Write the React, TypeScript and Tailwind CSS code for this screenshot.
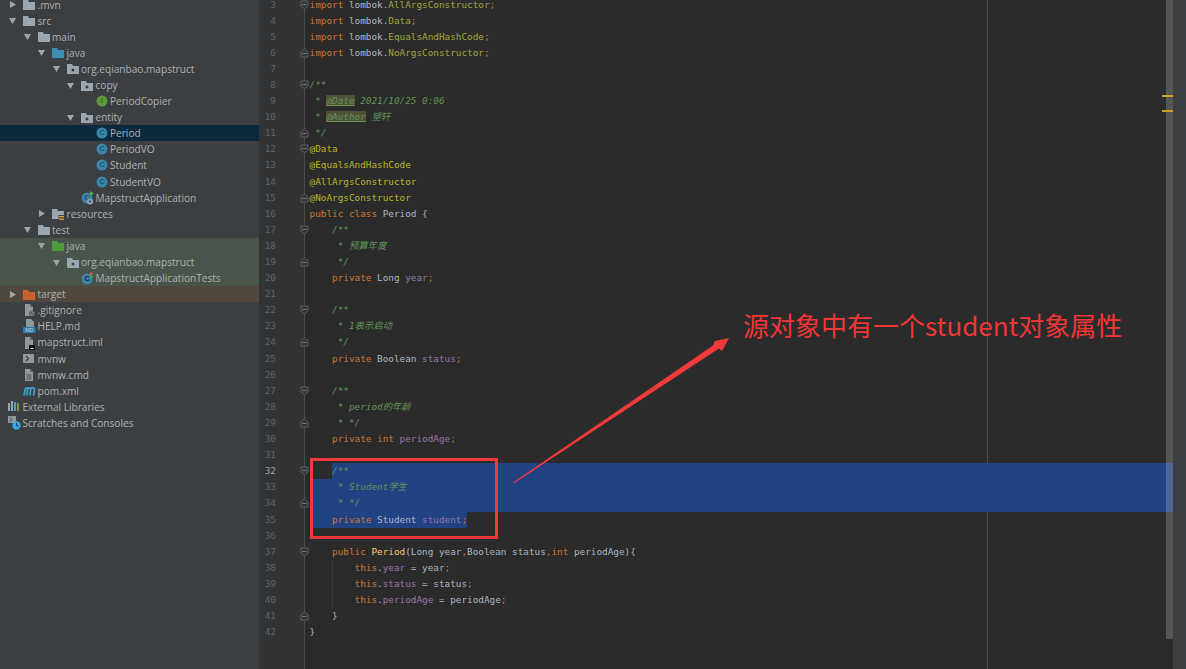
import type { ReactNode } from "react";

const Folder = ({ color }: { color: string }) => (
  <svg width="12" height="11" viewBox="0 0 12 11">
    <path d="M0 1h5l1 2h6v8H0z" fill={color} />
  </svg>
);

const PackageIcon = () => (
  <svg width="12" height="11" viewBox="0 0 12 11">
    <path d="M0 1h5l1 2h6v8H0z" fill="#9aa7b0" />
    <circle cx="6" cy="7" r="1.5" fill="#3c3f41" />
  </svg>
);

const ResourcesIcon = () => (
  <svg width="12" height="12" viewBox="0 0 12 12">
    <path d="M0 1h5l1 2h6v8H0z" fill="#9aa7b0" />
    <rect x="6.5" y="7" width="5.5" height="5" fill="#3c3f41" />
    <rect x="7" y="8" width="5" height="1.3" fill="#e0a030" />
    <rect x="7" y="10.5" width="5" height="1.3" fill="#e0a030" />
  </svg>
);

const Badge = ({ color, ink, letter }: { color: string; ink: string; letter: string }) => (
  <svg width="12" height="12" viewBox="0 0 12 12">
    <circle cx="6" cy="6" r="5.5" fill={color} />
    <text x="6" y="8.4" textAnchor="middle" fontSize="7" fontWeight="700" fontFamily="'Liberation Sans', sans-serif" fill={ink}>
      {letter}
    </text>
  </svg>
);

const AppIcon = () => (
  <svg width="13" height="14" viewBox="0 0 13 14">
    <circle cx="6" cy="7" r="5.5" fill="#3a86a8" />
    <text x="6" y="9.4" textAnchor="middle" fontSize="7" fontWeight="700" fontFamily="'Liberation Sans', sans-serif" fill="#1d4f68">
      C
    </text>
    <path d="M9 0l4 2.5L9 5z" fill="#4fae3e" />
    <circle cx="9" cy="10.5" r="3" fill="#8fa3b2" />
    <circle cx="9" cy="10.5" r="1.1" fill="#3c3f41" />
  </svg>
);

const TestIcon = () => (
  <svg width="13" height="13" viewBox="0 0 13 13">
    <circle cx="6" cy="7" r="5.5" fill="#3a86a8" />
    <text x="6" y="9.4" textAnchor="middle" fontSize="7" fontWeight="700" fontFamily="'Liberation Sans', sans-serif" fill="#10222c">
      C
    </text>
    <rect x="9" y="0.5" width="2.5" height="2.5" fill="#d8652f" />
    <rect x="9" y="3.5" width="2.5" height="2" fill="#4fae3e" />
  </svg>
);

const Sheet = ({ children }: { children?: ReactNode }) => (
  <svg width="12" height="14" viewBox="0 0 12 14">
    <path d="M2 1h5l3 3v9H2z" fill="#8e989f" />
    <path d="M7 1v3h3z" fill="#5d6468" />
    {children}
  </svg>
);

const GitIgnoreIcon = () => (
  <Sheet>
    <circle cx="9" cy="10.5" r="3" fill="#3c3f41" />
    <circle cx="9" cy="10.5" r="2" fill="none" stroke="#9aa7b0" strokeWidth="0.8" />
    <path d="M7.6 11.9l2.8-2.8" stroke="#9aa7b0" strokeWidth="0.8" />
  </Sheet>
);

const MdIcon = () => (
  <svg width="13" height="14" viewBox="0 0 13 14">
    <path d="M3 0h5l3 3v5H3z" fill="#8e989f" />
    <rect x="0" y="8" width="12.5" height="6" fill="#2b7aa5" />
    <text x="6.2" y="13" textAnchor="middle" fontSize="5.5" fontFamily="'Liberation Sans', sans-serif" fill="#c9dbe5">
      MD
    </text>
  </svg>
);

const ImlIcon = () => (
  <Sheet>
    <rect x="6" y="9" width="6" height="5" fill="#111" />
    <rect x="7.5" y="12" width="3" height="1" fill="#eee" />
  </Sheet>
);

const ShellIcon = () => (
  <svg width="11" height="9" viewBox="0 0 11 9">
    <rect width="11" height="9" fill="#8e989f" />
    <path d="M3 2l2.5 2.5L3 7" fill="none" stroke="#3c3f41" strokeWidth="1.2" />
  </svg>
);

const CmdIcon = () => (
  <Sheet>
    <path d="M3.5 7h5M3.5 9h5M3.5 11h5" stroke="#3c3f41" strokeWidth="0.9" />
  </Sheet>
);

const PomIcon = () => (
  <svg width="13" height="11" viewBox="0 0 13 11">
    <path
      d="M1 10.5L2.4 3.5C3.4 2.6 4.6 2.6 5.2 3.5C6.2 2.6 7.4 2.6 8 3.5C9 2.6 11 2.6 11.6 3.8L10.4 10.5M4.8 3.8L3.7 10.5M7.9 3.8L6.8 10.5"
      fill="none"
      stroke="#3f9fc7"
      strokeWidth="1.7"
    />
  </svg>
);

const LibrariesIcon = () => (
  <svg width="12" height="11" viewBox="0 0 12 11">
    <rect x="0" y="2" width="2" height="8" fill="#9aa7b0" />
    <rect x="3" y="0" width="2" height="10" fill="#9aa7b0" />
    <rect x="6" y="1" width="2" height="9" fill="#4f9ec4" />
    <rect x="9" y="2" width="2" height="8" fill="#62a04a" />
  </svg>
);

const ScratchIcon = () => (
  <svg width="13" height="14" viewBox="0 0 13 14">
    <rect x="0" y="0" width="8" height="7" fill="#8e989f" />
    <path d="M2 1.5l2 2-2 2" fill="none" stroke="#3c3f41" strokeWidth="1" />
    <circle cx="8.5" cy="9.5" r="4.2" fill="#35a8e0" />
    <path d="M8.5 7v2.7h2" fill="none" stroke="#1c3a4a" strokeWidth="1" />
  </svg>
);

const classIcon = <Badge color="#3a86a8" ink="#1d4f68" letter="C" />;

const gray = <Folder color="#9aa7b0" />;

const indent = ["pl-[7px]", "pl-[21.5px]", "pl-[36px]", "pl-[50.5px]", "pl-[65px]", "pl-[79.5px]"];

interface TreeRow {
  label: string;
  depth: number;
  icon: ReactNode;
  arrow?: "open" | "closed";
  tone?: string;
  root?: boolean;
}

const tree: TreeRow[] = [
  { label: ".mvn", depth: 0, icon: gray, arrow: "closed" },
  { label: "src", depth: 0, icon: gray, arrow: "open" },
  { label: "main", depth: 1, icon: gray, arrow: "open" },
  { label: "java", depth: 2, icon: <Folder color="#3f8fb5" />, arrow: "open" },
  { label: "org.eqianbao.mapstruct", depth: 3, icon: <PackageIcon />, arrow: "open" },
  { label: "copy", depth: 4, icon: <PackageIcon />, arrow: "open" },
  { label: "PeriodCopier", depth: 5, icon: <Badge color="#5c9a3c" ink="#2f5a1e" letter="I" /> },
  { label: "entity", depth: 4, icon: <PackageIcon />, arrow: "open" },
  { label: "Period", depth: 5, icon: classIcon, tone: "bg-[#0d293e]" },
  { label: "PeriodVO", depth: 5, icon: classIcon },
  { label: "Student", depth: 5, icon: classIcon },
  { label: "StudentVO", depth: 5, icon: classIcon },
  { label: "MapstructApplication", depth: 4, icon: <AppIcon /> },
  { label: "resources", depth: 2, icon: <ResourcesIcon />, arrow: "closed" },
  { label: "test", depth: 1, icon: gray, arrow: "open" },
  { label: "java", depth: 2, icon: <Folder color="#4f9a3c" />, arrow: "open", tone: "bg-[#49544a]" },
  { label: "org.eqianbao.mapstruct", depth: 3, icon: <PackageIcon />, arrow: "open", tone: "bg-[#49544a]" },
  { label: "MapstructApplicationTests", depth: 4, icon: <TestIcon />, tone: "bg-[#49544a]" },
  { label: "target", depth: 0, icon: <Folder color="#c8622c" />, arrow: "closed", tone: "bg-[#50483f]" },
  { label: ".gitignore", depth: 0, icon: <GitIgnoreIcon /> },
  { label: "HELP.md", depth: 0, icon: <MdIcon /> },
  { label: "mapstruct.iml", depth: 0, icon: <ImlIcon /> },
  { label: "mvnw", depth: 0, icon: <ShellIcon /> },
  { label: "mvnw.cmd", depth: 0, icon: <CmdIcon /> },
  { label: "pom.xml", depth: 0, icon: <PomIcon /> },
  { label: "External Libraries", depth: 0, icon: <LibrariesIcon />, root: true },
  { label: "Scratches and Consoles", depth: 0, icon: <ScratchIcon />, root: true },
];

function Arrow({ kind }: { kind: "open" | "closed" }) {
  return (
    <svg width="9" height="9" viewBox="0 0 9 9">
      {kind === "open" ? <path d="M1 2h7L4.5 8z" fill="#a0a5a8" /> : <path d="M2 1v7l6-3.5z" fill="#a0a5a8" />}
    </svg>
  );
}

function Sidebar() {
  return (
    <aside className="w-[259px] shrink-0 bg-[#3c3f41] pt-[1px] text-[10.1px] text-[#aeb1b3] font-['Open_Sans',sans-serif]">
      {tree.map((row, i) => (
        <div
          key={i}
          className={`flex h-[16.1px] items-center ${i === 0 ? "-mt-[4.5px]" : ""} ${row.tone ?? ""} ${row.root ? "pl-[8px]" : indent[row.depth]}`}
        >
          {!row.root && (
            <span className="w-[16px] shrink-0 flex items-center pl-[1px]">{row.arrow && <Arrow kind={row.arrow} />}</span>
          )}
          <span className="w-[14px] shrink-0 flex items-center justify-start">{row.icon}</span>
          <span className="ml-[0.5px] whitespace-pre leading-none">{row.label}</span>
        </div>
      ))}
    </aside>
  );
}

const kw = "text-[#cc7832]";
const plain = "text-[#a9b7c6]";
const cls = "text-[#a6a63e]";
const ann = "text-[#bbb529]";
const doc = "text-[#629755] italic";
const fld = "text-[#9876aa]";
const mth = "text-[#ffc66d]";
const tag = "text-[#629755] italic bg-[#4f5138] underline";

type Token = [string, string];

const importLine = (name: string): Token[] => [
  ["import ", kw],
  ["lombok.", plain],
  [name, cls],
  [";", kw],
];

const field = (type: string, name: string): Token[] => [
  ["    private ", kw],
  [type + " ", type === "int" ? kw : plain],
  [name, fld],
  [";", kw],
];

const comment = (text: string): Token[] => [[text, doc]];

const code: Token[][] = [
  importLine("AllArgsConstructor"),
  importLine("Data"),
  importLine("EqualsAndHashCode"),
  importLine("NoArgsConstructor"),
  [],
  comment("/**"),
  [[" * ", doc], ["@Date", tag], [" 2021/10/25 0:06", doc]],
  [[" * ", doc], ["@Author", tag], [" 望轩", doc]],
  comment(" */"),
  [["@Data", ann]],
  [["@EqualsAndHashCode", ann]],
  [["@AllArgsConstructor", ann]],
  [["@NoArgsConstructor", ann]],
  [["public class ", kw], ["Period ", plain], ["{", plain]],
  comment("    /**"),
  comment("     * 预算年度"),
  comment("     */"),
  field("Long", "year"),
  [],
  comment("    /**"),
  comment("     * 1表示启动"),
  comment("     */"),
  field("Boolean", "status"),
  [],
  comment("    /**"),
  comment("     * period的年龄"),
  comment("     * */"),
  field("int", "periodAge"),
  [],
  comment("/**"),
  comment(" * Student学生"),
  comment(" * */"),
  [["private ", kw], ["Student ", plain], ["student", fld], [";", kw]],
  [],
  [
    ["    public ", kw],
    ["Period", mth],
    ["(Long year", plain],
    [",", kw],
    ["Boolean status", plain],
    [",", kw],
    ["int ", kw],
    ["periodAge){", plain],
  ],
  [["        this", kw], [".", plain], ["year", fld], [" = year", plain], [";", kw]],
  [["        this", kw], [".", plain], ["status", fld], [" = status", plain], [";", kw]],
  [["        this", kw], [".", plain], ["periodAge", fld], [" = periodAge", plain], [";", kw]],
  [["    }", plain]],
  [["}", plain]],
];

const foldOpen = new Set([3, 8, 12, 17, 22, 27, 32, 37]);
const foldClose = new Set([6, 11, 15, 19, 24, 29, 34, 41]);
const guided = new Set([38, 39, 40]);

function FoldMark({ open }: { open: boolean }) {
  return (
    <svg className="absolute left-[41px] top-[3px]" width="9" height="10" viewBox="0 0 9 10">
      <path
        d={open ? "M1 1h7v5L4.5 9 1 6z" : "M1 9h7V4L4.5 1 1 4z"}
        fill="#313335"
        stroke="#5c5f61"
        strokeWidth="1"
      />
      <path d={open ? "M2.5 4.5h4" : "M2.5 5.5h4"} stroke="#77797b" strokeWidth="1" />
    </svg>
  );
}

function selectionFor(n: number) {
  if (n === 32) return "ml-[27px] flex-1 bg-[#214283]";
  if (n === 33 || n === 34) return "ml-[8px] pl-[19px] flex-1 bg-[#214283]";
  if (n === 35) return "ml-[8px] pl-[19px] w-[154px] bg-[#214283]";
  return "pl-[4.5px] flex-1";
}

function CodeLine({ n, tokens }: { n: number; tokens: Token[] }) {
  return (
    <div className="relative flex h-[16.1px] leading-[16.1px]">
      <div
        className={`w-[46px] shrink-0 bg-[#313335] border-r border-[#4a4b4c] pr-[28px] text-right ${
          n === 32 ? "text-[#a4a3a3]" : "text-[#606366]"
        }`}
      >
        {n}
      </div>
      <div className={`whitespace-pre ${selectionFor(n)}`}>
        {tokens.map(([text, color], i) => (
          <span key={i} className={color}>
            {text}
          </span>
        ))}
      </div>
      {foldOpen.has(n) && <FoldMark open />}
      {foldClose.has(n) && <FoldMark open={false} />}
      {guided.has(n) && <div className="absolute left-[73px] top-0 bottom-0 w-px bg-[#3b3b3b]" />}
    </div>
  );
}

function Editor() {
  return (
    <main className="relative flex-1 bg-[#2b2b2b] overflow-hidden">
      <div className="absolute left-[728px] top-0 bottom-0 w-px bg-[#4d4d4d]" />
      <div className="relative pt-[0.5px] h-full flex flex-col text-[9.35px] font-['DejaVu_Sans_Mono','Noto_Sans_CJK_SC',monospace]">
        <div className="-mt-[4px]" />
        {code.map((tokens, i) => (
          <CodeLine key={i} n={i + 3} tokens={tokens} />
        ))}
        <div className="flex-1 w-[46px] bg-[#313335] border-r border-[#4a4b4c]" />
      </div>
      {/* scrollbar and error stripe */}
      <div className="absolute right-0 top-0 w-[7px] h-[639px] bg-white/20" />
      <div className="absolute right-0 top-[95px] w-[11px] h-[2px] bg-[#c9a227]" />
      <div className="absolute right-0 top-[110px] w-[11px] h-[2px] bg-[#c9a227]" />
    </main>
  );
}

export default function App() {
  return (
    <div className="relative flex h-screen w-full overflow-hidden bg-[#2b2b2b]">
      <Sidebar />
      <Editor />
      <div className="w-[13px] shrink-0 bg-[#3c3f41]" />

      {/* annotation drawn over the screenshot */}
      <div className="absolute left-[310px] top-[458px] w-[188px] h-[81px] border-[3px] border-[#f03a3a]" />
      <svg className="absolute left-0 top-0 pointer-events-none" width="1186" height="669" viewBox="0 0 1186 669">
        <polygon points="513,482.4 713,345.5 715,341 729,338 722,351 719,348.5 513.6,483.4" fill="#f23a3a" />
      </svg>
      <div className="absolute left-[743px] top-[307px] text-[26px] leading-[36px] whitespace-nowrap text-[#f33636] font-['Noto_Sans_CJK_SC','Noto_Sans',sans-serif]">
        源对象中有一个student对象属性
      </div>
    </div>
  );
}
